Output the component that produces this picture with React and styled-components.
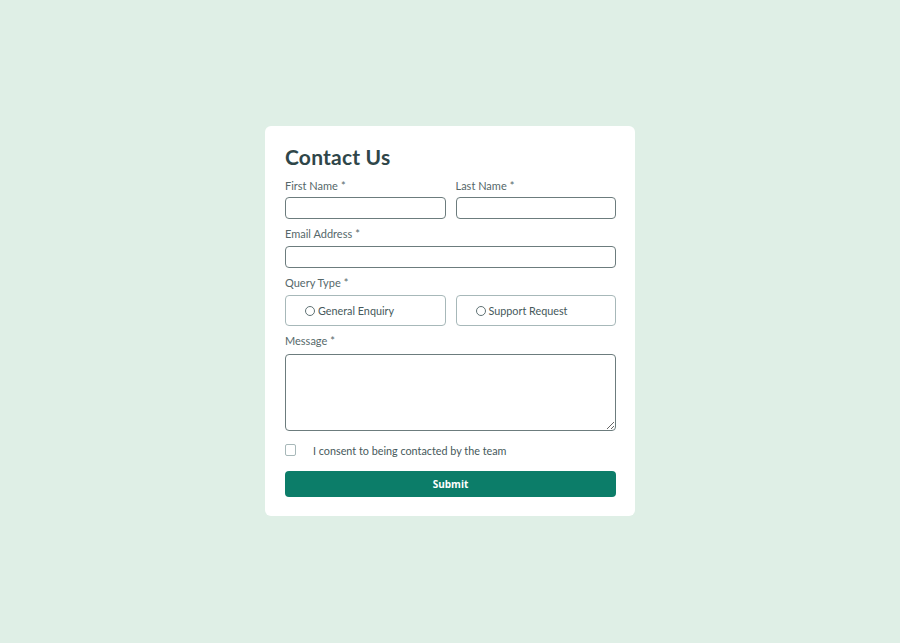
import React from "react";
import styled, { createGlobalStyle } from "styled-components";

const Global = createGlobalStyle`
  html, body { margin: 0; padding: 0; }
  body {
    background: #dfefe6;
    font-family: "Lato", "Noto Sans", sans-serif;
    color: #2a4144;
  }
  * { box-sizing: border-box; }
`;

const Page = styled.div`
  width: 900px;
  height: 643px;
  display: flex;
  align-items: flex-start;
  justify-content: center;
  padding-top: 126px;
`;

const Card = styled.form`
  width: 370px;
  background: #ffffff;
  border-radius: 6px;
  padding: 20px 19px 19px 20px;
  display: flex;
  flex-direction: column;
  gap: 9px;
`;

const Title = styled.h1`
  margin: 0 0 3px;
  font-size: 21px;
  line-height: 22px;
  font-weight: 700;
  color: #2f4649;
  letter-spacing: 0.2px;
`;

const Row = styled.div`
  display: grid;
  grid-template-columns: 1fr 1fr;
  gap: 10px;
`;

const Field = styled.div`
  display: flex;
  flex-direction: column;
  gap: ${(p) => p.$gap || 6}px;
`;

const Label = styled.label`
  font-size: 11px;
  line-height: 12px;
  color: #56686a;
  span { margin-left: 3px; }
`;

const Input = styled.input`
  height: 22px;
  width: 100%;
  border: 1px solid #6c7c7d;
  border-radius: 4px;
  background: #fff;
  padding: 0 8px;
  font: inherit;
  outline: none;
`;

const Textarea = styled.textarea`
  display: block;
  height: 77px;
  width: 100%;
  border: 1px solid #6c7c7d;
  border-radius: 4px;
  background: #fff;
  padding: 6px 8px;
  font: inherit;
  outline: none;
  margin: 0;
`;

const RadioBox = styled.label`
  height: 31px;
  border: 1px solid #a7b8b9;
  border-radius: 4px;
  display: flex;
  align-items: center;
  padding-left: 19px;
  gap: 3px;
  font-size: 10.8px;
  color: #46595b;
`;

const Circle = styled.span`
  width: 10px;
  height: 10px;
  border-radius: 50%;
  border: 1px solid #5f7274;
  display: inline-block;
`;

const Consent = styled.label`
  display: flex;
  align-items: center;
  gap: 17px;
  font-size: 10.8px;
  color: #46595b;
  margin-top: 4px;
  height: 12px;
`;

const Box = styled.span`
  width: 11px;
  height: 12px;
  border: 1px solid #a7b8b9;
  border-radius: 2px;
  display: inline-block;
`;

const Submit = styled.button`
  margin-top: 6px;
  height: 26px;
  width: 100%;
  border: none;
  border-radius: 4px;
  background: #0c7d69;
  color: #fff;
  font-family: "Open Sans", sans-serif;
  font-weight: 700;
  font-size: 10px;
  cursor: pointer;
`;

const Req = () => <span>*</span>;

export default function App() {
  return (
    <>
      <Global />
      <Page>
        <Card onSubmit={(e) => e.preventDefault()}>
          <Title>Contact Us</Title>
          <Row>
            <Field $gap={5}>
              <Label>First Name<Req /></Label>
              <Input type="text" />
            </Field>
            <Field $gap={5}>
              <Label>Last Name<Req /></Label>
              <Input type="text" />
            </Field>
          </Row>
          <Field>
            <Label>Email Address<Req /></Label>
            <Input type="email" />
          </Field>
          <Field $gap={6}>
            <Label>Query Type<Req /></Label>
            <Row>
              <RadioBox><Circle />General Enquiry</RadioBox>
              <RadioBox><Circle />Support Request</RadioBox>
            </Row>
          </Field>
          <Field $gap={7}>
            <Label>Message<Req /></Label>
            <Textarea />
          </Field>
          <Consent><Box />I consent to being contacted by the team</Consent>
          <Submit type="submit">Submit</Submit>
        </Card>
      </Page>
    </>
  );
}
